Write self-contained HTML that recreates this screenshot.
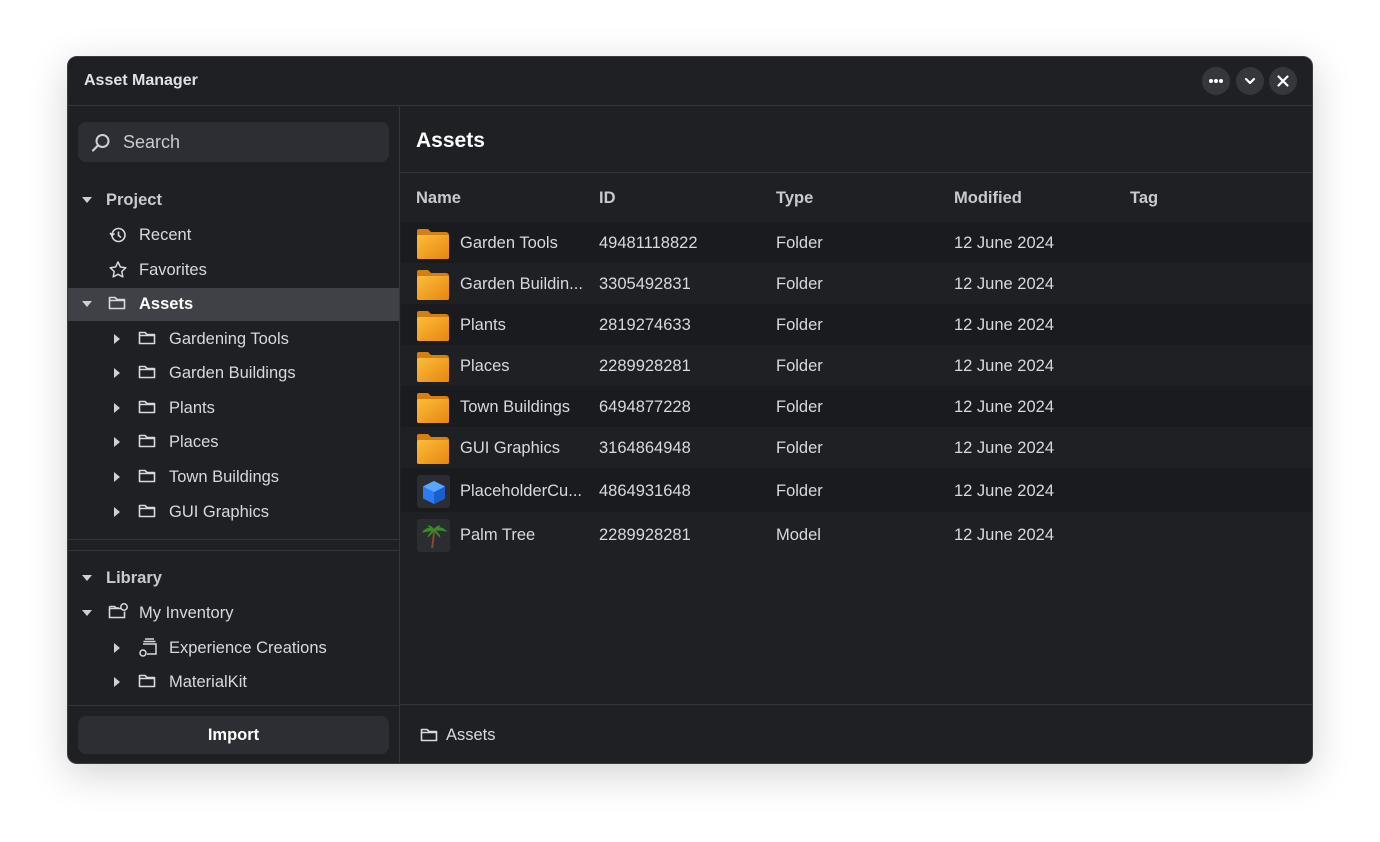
<!DOCTYPE html>
<html><head><meta charset="utf-8"><style>
*{box-sizing:border-box;margin:0;padding:0}
body{width:1380px;height:842px;background:#fff;font-family:"Liberation Sans",sans-serif;position:relative;overflow:hidden;color:#d8d9dc}
.win{position:absolute;left:67px;top:56px;width:1246px;height:708px;background:#1f2024;border-radius:10px;border:1px solid #3a3b40;box-shadow:0 10px 40px rgba(0,0,0,.18);overflow:hidden}
.a{position:absolute}
.hl{position:absolute;height:1px;background:#34363b}
.vl{position:absolute;width:1px;background:#34363b}
.t{position:absolute;font-size:16.5px;white-space:nowrap;line-height:20px}
.b{font-weight:bold}
.row{position:absolute;left:333px;width:913px}
.dk{background:#1a1b1e}
.btn{position:absolute;width:28px;height:28px;border-radius:14px;background:#36373c;top:10px}
</style></head><body>
<div class="win">
 <div class="t b" style="left:16px;top:14px;font-size:16px;color:#e0e1e4">Asset Manager</div>
 <div class="btn" style="left:1134px"><svg width="28" height="28"><circle cx="9" cy="14" r="2" fill="#fff"/><circle cx="14" cy="14" r="2" fill="#fff"/><circle cx="19" cy="14" r="2" fill="#fff"/></svg></div>
 <div class="btn" style="left:1168px"><svg width="28" height="28"><path d="M10 12l4 4 4-4" stroke="#fff" stroke-width="2.2" fill="none" stroke-linecap="round" stroke-linejoin="round"/></svg></div>
 <div class="btn" style="left:1201px"><svg width="28" height="28"><path d="M9.5 9.5l9 9M18.5 9.5l-9 9" stroke="#fff" stroke-width="2.2" stroke-linecap="round"/></svg></div>
 <div class="hl" style="left:0;top:48px;width:1246px"></div>
 <div class="vl" style="left:331px;top:49px;height:659px"></div>
 <!-- sidebar -->
 <div class="a" style="left:10px;top:65px;width:311px;height:40px;border-radius:8px;background:#2d2e34"></div>
 <svg class="a" style="left:22px;top:75px" width="22" height="22"><circle cx="12.5" cy="9" r="6" stroke="#cfd0d4" stroke-width="2" fill="none"/><path d="M8 13.5l-5 5" stroke="#cfd0d4" stroke-width="2.2" stroke-linecap="round"/></svg>
 <div class="t" style="left:55px;top:75px;font-size:18px;color:#c9cacd">Search</div>
 <svg width="0" height="0" style="position:absolute"><defs>
  <g id="tri"><path d="M0 0h10l-5 6z" fill="#cfd0d4"/></g>
  <g id="trr"><path d="M0 0v10l6-5z" fill="#cfd0d4"/></g>
  <g id="fo"><path d="M1.5 3.5v11h15v-9h-7.5l-2-2z M1.5 6.5h15" stroke="#d8d9dc" stroke-width="1.6" fill="none" stroke-linejoin="round"/></g>
  <g id="ff"><path d="M0 3a2 2 0 0 1 2-2h9l3 3h15a3 3 0 0 1 3 3v22a2 2 0 0 1-2 2H2a2 2 0 0 1-2-2z" fill="#d57f10"/><path d="M0 9a2 2 0 0 1 2-2h28a2 2 0 0 1 2 2v20a2 2 0 0 1-2 2H2a2 2 0 0 1-2-2z" fill="#f5a623"/><path d="M0 9a2 2 0 0 1 2-2h28a2 2 0 0 1 2 2v20a2 2 0 0 1-2 2H2a2 2 0 0 1-2-2z" fill="url(#gr)"/>
  <linearGradient id="gr" x1="0" y1="0" x2="1" y2="1"><stop offset="0" stop-color="#fbbd3a"/><stop offset="1" stop-color="#e8860f"/></linearGradient></g>
 </defs></svg>
 <svg class="a" style="left:14px;top:140px" width="10" height="6"><use href="#tri"/></svg>
 <div class="t b" style="left:38px;top:133px;color:#c9cacd">Project</div>
 <svg class="a" style="left:40px;top:168px" width="20" height="20"><circle cx="10.5" cy="10" r="6.5" stroke="#d8d9dc" stroke-width="1.6" fill="none"/><path d="M10.5 6.5v4l2.5 2" stroke="#d8d9dc" stroke-width="1.6" fill="none"/><path d="M2 8l2 2.5 2.5-2" stroke="#d8d9dc" stroke-width="1.6" fill="none"/></svg>
 <div class="t" style="left:71px;top:168px">Recent</div>
 <svg class="a" style="left:40px;top:203px" width="20" height="20"><path d="M10 2l2.4 5 5.4.7-4 3.8 1 5.4L10 14.3 5.2 16.9l1-5.4-4-3.8 5.4-.7z" stroke="#d8d9dc" stroke-width="1.5" fill="none" stroke-linejoin="round"/></svg>
 <div class="t" style="left:71px;top:203px">Favorites</div>
 <div class="a" style="left:0;top:231px;width:331px;height:33px;background:#404146"></div>
 <svg class="a" style="left:14px;top:244px" width="10" height="6"><use href="#tri"/></svg>
 <svg class="a" style="left:40px;top:237px" width="20" height="20"><use href="#fo"/></svg>
 <div class="t b" style="left:71px;top:237px;color:#fff">Assets</div>
 <svg class="a" style="left:46px;top:277px" width="6" height="10"><use href="#trr"/></svg><svg class="a" style="left:70px;top:272px" width="20" height="20"><use href="#fo"/></svg><div class="t" style="left:101px;top:272px">Gardening Tools</div>
 <svg class="a" style="left:46px;top:311px" width="6" height="10"><use href="#trr"/></svg><svg class="a" style="left:70px;top:306px" width="20" height="20"><use href="#fo"/></svg><div class="t" style="left:101px;top:306px">Garden Buildings</div>
 <svg class="a" style="left:46px;top:346px" width="6" height="10"><use href="#trr"/></svg><svg class="a" style="left:70px;top:341px" width="20" height="20"><use href="#fo"/></svg><div class="t" style="left:101px;top:341px">Plants</div>
 <svg class="a" style="left:46px;top:380px" width="6" height="10"><use href="#trr"/></svg><svg class="a" style="left:70px;top:375px" width="20" height="20"><use href="#fo"/></svg><div class="t" style="left:101px;top:375px">Places</div>
 <svg class="a" style="left:46px;top:415px" width="6" height="10"><use href="#trr"/></svg><svg class="a" style="left:70px;top:410px" width="20" height="20"><use href="#fo"/></svg><div class="t" style="left:101px;top:410px">Town Buildings</div>
 <svg class="a" style="left:46px;top:450px" width="6" height="10"><use href="#trr"/></svg><svg class="a" style="left:70px;top:445px" width="20" height="20"><use href="#fo"/></svg><div class="t" style="left:101px;top:445px">GUI Graphics</div>
 <div class="hl" style="left:0;top:482px;width:331px"></div>
 <div class="hl" style="left:0;top:493px;width:331px"></div>
 <svg class="a" style="left:14px;top:518px" width="10" height="6"><use href="#tri"/></svg>
 <div class="t b" style="left:38px;top:511px;color:#c9cacd">Library</div>
 <svg class="a" style="left:14px;top:553px" width="10" height="6"><use href="#tri"/></svg>
 <svg class="a" style="left:40px;top:545px" width="22" height="22"><path d="M1.5 4.5v11h15v-6 M13 6.5h-11.5 M1.5 4.5h5l1.5 1.5h3" stroke="#d8d9dc" stroke-width="1.6" fill="none"/><circle cx="16" cy="5" r="3.2" stroke="#d8d9dc" stroke-width="1.5" fill="none"/></svg>
 <div class="t" style="left:71px;top:546px">My Inventory</div>
 <svg class="a" style="left:46px;top:586px" width="6" height="10"><use href="#trr"/></svg>
 <svg class="a" style="left:70px;top:580px" width="22" height="22"><path d="M7 2h9M5.5 4.5h12M5 7h13v10h-9" stroke="#d8d9dc" stroke-width="1.5" fill="none"/><circle cx="5" cy="16" r="3" stroke="#d8d9dc" stroke-width="1.5" fill="none"/></svg>
 <div class="t" style="left:101px;top:581px">Experience Creations</div>
 <svg class="a" style="left:46px;top:620px" width="6" height="10"><use href="#trr"/></svg><svg class="a" style="left:70px;top:615px" width="20" height="20"><use href="#fo"/></svg><div class="t" style="left:101px;top:615px">MaterialKit</div>
 <div class="hl" style="left:0;top:648px;width:331px"></div>
 <div class="a" style="left:10px;top:659px;width:311px;height:38px;border-radius:8px;background:#2d2e34"></div>
 <div class="t b" style="left:10px;top:668px;width:311px;text-align:center;color:#fff">Import</div>
 <!-- right -->
 <div class="t b" style="left:348px;top:72px;font-size:21px;color:#fff;line-height:24px">Assets</div>
 <div class="hl" style="left:332px;top:115px;width:914px"></div>
 <div class="t b" style="left:348px;top:131px;color:#c9cacd">Name</div>
 <div class="t b" style="left:531px;top:131px;color:#c9cacd">ID</div>
 <div class="t b" style="left:708px;top:131px;color:#c9cacd">Type</div>
 <div class="t b" style="left:886px;top:131px;color:#c9cacd">Modified</div>
 <div class="t b" style="left:1062px;top:131px;color:#c9cacd">Tag</div>
 <div class="row dk" style="top:165px;height:41px"></div>
 <div class="row dk" style="top:247px;height:41px"></div>
 <div class="row dk" style="top:329px;height:41px"></div>
 <div class="row dk" style="top:411px;height:44px"></div>
 <svg class="a" style="left:349px;top:171px" width="32" height="32"><use href="#ff"/></svg>
 <svg class="a" style="left:349px;top:212px" width="32" height="32"><use href="#ff"/></svg>
 <svg class="a" style="left:349px;top:253px" width="32" height="32"><use href="#ff"/></svg>
 <svg class="a" style="left:349px;top:294px" width="32" height="32"><use href="#ff"/></svg>
 <svg class="a" style="left:349px;top:335px" width="32" height="32"><use href="#ff"/></svg>
 <svg class="a" style="left:349px;top:376px" width="32" height="32"><use href="#ff"/></svg>
 <div class="a" style="left:349px;top:418px;width:33px;height:33px;border-radius:3px;background:#2c2d32"></div>
 <svg class="a" style="left:351px;top:420px" width="30" height="30"><path d="M15 4l11 5.5v12L15 27 4 21.5v-12z" fill="#2a7cf0"/><path d="M15 15l11-5.5v12L15 27z" fill="#1a5fd0"/><path d="M15 4l11 5.5L15 15 4 9.5z" fill="#5aa6ff"/></svg>
 <div class="a" style="left:349px;top:462px;width:33px;height:33px;border-radius:3px;background:#2c2d32"></div>
 <svg class="a" style="left:351px;top:464px" width="30" height="30"><path d="M15 9c0 6-1 12-2 18" stroke="#8a4b1e" stroke-width="2" fill="none"/><path d="M15 9c-3-3-8-2-11 2 4-1 7-1 11-2zM15 9c3-3 8-3 12 1-4-1-8-1-12-1zM15 9c-2 1-5 4-6 7 2-2 4-4 6-7zM15 9c2 1 5 4 6 7-2-2-4-4-6-7zM15 9c-1-2-3-4-6-4 2 1 4 2 6 4zM15 9c1-2 3-4 6-4-2 1-4 2-6 4z" fill="#3a8a2a" stroke="#3a8a2a" stroke-width="1"/></svg>
 <div class="t" style="left:392px;top:176px">Garden Tools</div><div class="t" style="left:531px;top:176px">49481118822</div><div class="t" style="left:708px;top:176px">Folder</div><div class="t" style="left:886px;top:176px">12 June 2024</div>
 <div class="t" style="left:392px;top:217px">Garden Buildin...</div><div class="t" style="left:531px;top:217px">3305492831</div><div class="t" style="left:708px;top:217px">Folder</div><div class="t" style="left:886px;top:217px">12 June 2024</div>
 <div class="t" style="left:392px;top:258px">Plants</div><div class="t" style="left:531px;top:258px">2819274633</div><div class="t" style="left:708px;top:258px">Folder</div><div class="t" style="left:886px;top:258px">12 June 2024</div>
 <div class="t" style="left:392px;top:299px">Places</div><div class="t" style="left:531px;top:299px">2289928281</div><div class="t" style="left:708px;top:299px">Folder</div><div class="t" style="left:886px;top:299px">12 June 2024</div>
 <div class="t" style="left:392px;top:340px">Town Buildings</div><div class="t" style="left:531px;top:340px">6494877228</div><div class="t" style="left:708px;top:340px">Folder</div><div class="t" style="left:886px;top:340px">12 June 2024</div>
 <div class="t" style="left:392px;top:381px">GUI Graphics</div><div class="t" style="left:531px;top:381px">3164864948</div><div class="t" style="left:708px;top:381px">Folder</div><div class="t" style="left:886px;top:381px">12 June 2024</div>
 <div class="t" style="left:392px;top:424px">PlaceholderCu...</div><div class="t" style="left:531px;top:424px">4864931648</div><div class="t" style="left:708px;top:424px">Folder</div><div class="t" style="left:886px;top:424px">12 June 2024</div>
 <div class="t" style="left:392px;top:468px">Palm Tree</div><div class="t" style="left:531px;top:468px">2289928281</div><div class="t" style="left:708px;top:468px">Model</div><div class="t" style="left:886px;top:468px">12 June 2024</div>
 <div class="hl" style="left:332px;top:647px;width:914px"></div>
 <svg class="a" style="left:352px;top:669px" width="20" height="20"><use href="#fo"/></svg>
 <div class="t" style="left:378px;top:668px">Assets</div>
</div>
</body></html>
